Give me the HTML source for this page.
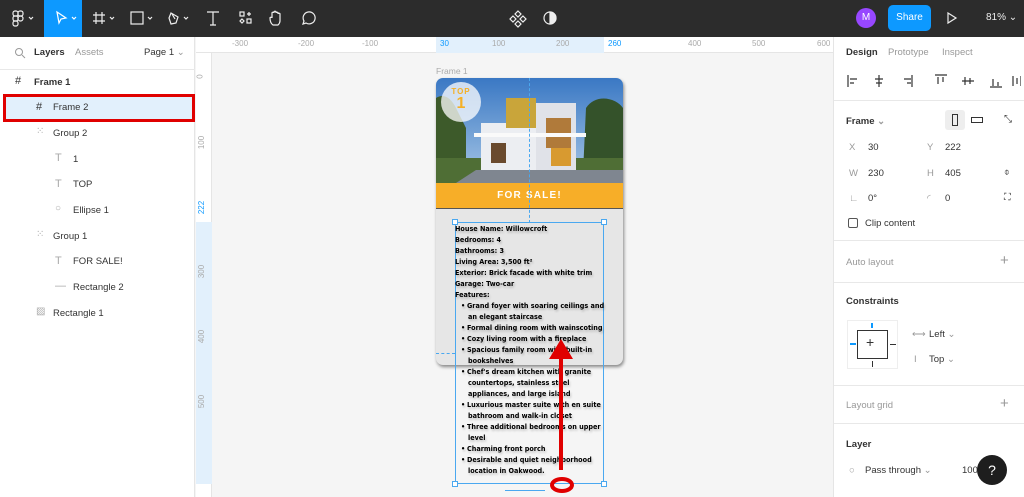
<!DOCTYPE html>
<html><head><meta charset="utf-8"><style>
*{box-sizing:border-box;margin:0;padding:0}
body{width:1024px;height:497px;overflow:hidden;font-family:"Liberation Sans",sans-serif;background:#f5f5f5;position:relative;font-size:10px;color:#333}
.abs{position:absolute}
.top{left:0;top:0;width:1024px;height:37px;background:#2c2c2c}
.left{left:0;top:37px;width:195px;height:460px;background:#fff;border-right:1px solid #e5e5e5}
.ly{position:absolute;font-size:9.5px;color:#333}
.gi{position:absolute;color:#aaa;font-size:11px}
.right{left:833px;top:37px;width:191px;height:460px;background:#fff;border-left:1px solid #e5e5e5}
.sep{position:absolute;left:0;width:191px;border-top:1px solid #e8e8e8}
.rt{position:absolute;font-size:9.5px;color:#333}
.g{color:#999}
.card{left:436px;top:78px;width:187px;height:287px;border-radius:7px;overflow:hidden;background:#e6e6e6;box-shadow:1px 2px 3px rgba(0,0,0,.45)}
.txt{left:455px;top:223px;font-family:"DejaVu Sans Condensed","Liberation Sans",sans-serif;font-weight:bold;font-size:7.2px;line-height:11px;color:#000;text-shadow:1px 2px 2px rgba(0,0,0,.2);width:170px;white-space:nowrap}
.txt .b{padding-left:6px;position:relative}
.txt .b:before{content:"•";position:absolute;left:0}
.txt .i{padding-left:13px}
</style></head><body>
<div class="abs top">
 <div class="abs" style="left:44px;top:0;width:38px;height:37px;background:#0d99ff"></div>
 <svg class="abs" style="left:0;top:0" width="330" height="37" fill="none" stroke="#eee" stroke-width="1.2">
  <rect x="13" y="11" width="5" height="5" rx="2"/><rect x="18" y="11" width="5" height="5" rx="2"/><rect x="13" y="16" width="5" height="5" rx="2"/><circle cx="20.5" cy="18.5" r="2.5"/><rect x="13" y="21" width="5" height="5" rx="2"/>
  <path d="M29 17l2 2 2-2"/>
  <path d="M57 12l9 6-5 1-2 4z" stroke="#fff"/><path d="M72 17l2 2 2-2" stroke="#fff"/>
  <path d="M96 12v12M102 12v12M93 15h12M93 21h12"/><path d="M110 17l2 2 2-2"/>
  <rect x="131" y="12" width="12" height="12"/><path d="M148 17l2 2 2-2"/>
  <path d="M171 13l7 4-2 6-5 1-2-6z M172 14l3 5"/><path d="M184 17l2 2 2-2"/>
  <path d="M207 12h12M213 12v13M210 25h6"/>
  <rect x="240" y="12" width="4" height="4"/><path d="M249 12v4M247 14h4"/><path d="M242 19l2 2-2 2-2-2z"/><rect x="247" y="19" width="4" height="4"/>
  <path d="M273 25c-3-2-3-5-3-7 0-1 2-1 2 0v-5c0-1 2-1 2 0v-1c0-1 2-1 2 0v1c0-1 2-1 2 0v1c0-1 2-1 2 0v7c0 2-1 3-2 4z"/>
  <path d="M303 24l1-3a6 6 0 1 1 2 2z"/>
 </svg>
 <svg class="abs" style="left:505px;top:9px" width="60" height="20" fill="none" stroke="#eee" stroke-width="1.2">
  <path d="M13 3l3 3-3 3-3-3zM8 8l3 3-3 3-3-3zM18 8l3 3-3 3-3-3zM13 13l3 3-3 3-3-3z" transform="translate(0,-1)"/>
  <circle cx="45" cy="9" r="6"/><path d="M45 3a6 6 0 0 1 0 12z" fill="#eee"/>
 </svg>
 <div class="abs" style="left:856px;top:8px;width:20px;height:20px;border-radius:50%;background:#9747ff;color:#fff;font-size:10px;text-align:center;line-height:20px">M</div>
 <div class="abs" style="left:888px;top:5px;width:43px;height:26px;border-radius:5px;background:#0d99ff;color:#fff;font-size:10px;text-align:center;line-height:26px">Share</div>
 <svg class="abs" style="left:945px;top:11px" width="14" height="14" fill="none" stroke="#eee" stroke-width="1.2"><path d="M3 2l8 5-8 5z"/></svg>
 <div class="abs" style="left:986px;top:12px;color:#eee;font-size:10px">81% ⌄</div>
</div>

<div class="abs left">
 <div class="abs" style="top:32px;left:0;width:195px;border-top:1px solid #e8e8e8"></div>
 <svg class="abs" style="left:14px;top:10px" width="12" height="12" fill="none" stroke="#999"><circle cx="5" cy="5" r="3.5"/><path d="M8 8l3 3"/></svg>
 <div class="ly" style="left:34px;top:10px;font-weight:bold;color:#333">Layers</div>
 <div class="ly" style="left:75px;top:10px;color:#999">Assets</div>
 <div class="ly" style="left:144px;top:10px">Page 1 <span class="g">⌄</span></div>
 <div class="gi" style="left:15px;top:38px;color:#333">#</div>
 <div class="ly" style="left:34px;top:40px;font-weight:bold">Frame 1</div>
 <div class="abs" style="left:3px;top:57px;width:192px;height:28px;background:#e2f0fc;border:3px solid #e00000"></div>
 <div class="gi" style="left:36px;top:64px;color:#333">#</div>
 <div class="ly" style="left:53px;top:65px">Frame 2</div>
 <div class="gi" style="left:36px;top:89px;font-size:10px">⁙</div><div class="ly" style="left:53px;top:91px">Group 2</div>
 <div class="gi" style="left:55px;top:115px">T</div><div class="ly" style="left:73px;top:117px">1</div>
 <div class="gi" style="left:55px;top:141px">T</div><div class="ly" style="left:73px;top:142px">TOP</div>
 <div class="gi" style="left:55px;top:166px;font-size:10px">○</div><div class="ly" style="left:73px;top:168px">Ellipse 1</div>
 <div class="gi" style="left:36px;top:192px;font-size:10px">⁙</div><div class="ly" style="left:53px;top:194px">Group 1</div>
 <div class="gi" style="left:55px;top:218px">T</div><div class="ly" style="left:73px;top:219px">FOR SALE!</div>
 <div class="gi" style="left:55px;top:243px">—</div><div class="ly" style="left:73px;top:245px">Rectangle 2</div>
 <div class="gi" style="left:36px;top:269px;font-size:10px">▨</div><div class="ly" style="left:53px;top:271px">Rectangle 1</div>
</div>

<div class="abs" style="left:196px;top:37px;width:637px;height:16px;background:#fff;border-bottom:1px solid #e5e5e5"></div>
<div class="abs" style="left:436px;top:37px;width:168px;height:16px;background:#e2f0fc"></div>
<div class="abs" style="left:196px;top:53px;width:16px;height:444px;background:#fff;border-right:1px solid #e5e5e5"></div>
<div class="abs" style="left:196px;top:222px;width:16px;height:262px;background:#e2f0fc"></div>
<div class="abs" style="top:39px;left:0;font-size:8px;color:#aaa;width:1024px">
 <span class="abs" style="left:232px">-300</span><span class="abs" style="left:298px">-200</span><span class="abs" style="left:362px">-100</span><span class="abs" style="left:440px;color:#0d99ff">30</span><span class="abs" style="left:492px">100</span><span class="abs" style="left:556px">200</span><span class="abs" style="left:608px;color:#0d99ff">260</span><span class="abs" style="left:688px">400</span><span class="abs" style="left:752px">500</span><span class="abs" style="left:817px">600</span>
</div>
<div class="abs" style="left:198px;top:72px;font-size:8px;color:#aaa;transform:rotate(-90deg)">0</div>
<div class="abs" style="left:195px;top:138px;font-size:8px;color:#aaa;transform:rotate(-90deg)">100</div>
<div class="abs" style="left:195px;top:203px;font-size:8px;color:#0d99ff;transform:rotate(-90deg)">222</div>
<div class="abs" style="left:195px;top:267px;font-size:8px;color:#aaa;transform:rotate(-90deg)">300</div>
<div class="abs" style="left:195px;top:332px;font-size:8px;color:#aaa;transform:rotate(-90deg)">400</div>
<div class="abs" style="left:195px;top:397px;font-size:8px;color:#aaa;transform:rotate(-90deg)">500</div>

<div class="abs" style="left:436px;top:66px;font-size:8.5px;color:#aaa">Frame 1</div>
<div class="abs card">
 <svg width="187" height="105" style="display:block">
  <defs><linearGradient id="sky" x1="0" y1="0" x2="0" y2="1"><stop offset="0" stop-color="#3a78c4"/><stop offset="1" stop-color="#a9c8e6"/></linearGradient></defs>
  <rect width="187" height="105" fill="url(#sky)"/>
  <path d="M0 20c8-5 15 0 20 10l10 20 0 40H0z" fill="#3d5a2a"/>
  <path d="M150 30c10-15 30-10 37 0v65h-40z" fill="#34522a"/>
  <rect x="0" y="80" width="187" height="25" fill="#4f6e35"/>
  <path d="M40 92h147v13H20z" fill="#7f8690"/>
  <rect x="45" y="45" width="55" height="47" fill="#eceef2"/>
  <rect x="70" y="20" width="30" height="30" fill="#c9a53a"/>
  <rect x="100" y="25" width="40" height="67" fill="#e0e2e8"/>
  <rect x="110" y="40" width="25" height="30" fill="#b07a3a"/>
  <rect x="38" y="55" width="112" height="4" fill="#fafafa"/>
  <rect x="55" y="65" width="15" height="20" fill="#6a4a2e"/>
  <rect x="115" y="70" width="20" height="18" fill="#d89a30"/>
 </svg>
 <div class="abs" style="left:5px;top:4px;width:40px;height:40px;border-radius:50%;background:rgba(255,255,255,.75);text-align:center;color:#f5b026;font-weight:bold">
  <div style="font-size:8px;margin-top:5px;letter-spacing:1px">TOP</div><div style="font-size:16px;line-height:15px">1</div></div>
 <div style="height:26px;background:#f7ae28;border-bottom:1px solid #555;color:#fff;font-weight:bold;font-size:10px;letter-spacing:1.2px;text-align:center;line-height:26px">FOR SALE!</div>
</div>
<div class="abs" style="left:529px;top:78px;height:145px;border-left:1px dashed #4aa8f0"></div>
<div class="abs" style="left:436px;top:353px;width:19px;border-top:1px dashed #4aa8f0"></div>
<div class="abs" style="left:455px;top:222px;width:149px;height:262px;border:1px solid #4aa8f0"></div>
<div class="abs" style="left:452px;top:219px;width:6px;height:6px;background:#fff;border:1px solid #4aa8f0"></div>
<div class="abs" style="left:601px;top:219px;width:6px;height:6px;background:#fff;border:1px solid #4aa8f0"></div>
<div class="abs" style="left:452px;top:481px;width:6px;height:6px;background:#fff;border:1px solid #4aa8f0"></div>
<div class="abs" style="left:601px;top:481px;width:6px;height:6px;background:#fff;border:1px solid #4aa8f0"></div>
<div class="abs" style="left:505px;top:490px;width:40px;border-top:1px solid #4aa8f0"></div>
<div class="abs txt">
<div>House Name: Willowcroft</div><div>Bedrooms: 4</div><div>Bathrooms: 3</div><div>Living Area: 3,500 ft²</div><div>Exterior: Brick facade with white trim</div><div>Garage: Two-car</div><div>Features:</div>
<div class="b" style="margin-left:6px">Grand foyer with soaring ceilings and</div><div class="i">an elegant staircase</div>
<div class="b" style="margin-left:6px">Formal dining room with wainscoting</div>
<div class="b" style="margin-left:6px">Cozy living room with a fireplace</div>
<div class="b" style="margin-left:6px">Spacious family room with built-in</div><div class="i">bookshelves</div>
<div class="b" style="margin-left:6px">Chef's dream kitchen with granite</div><div class="i">countertops, stainless steel</div><div class="i">appliances, and large island</div>
<div class="b" style="margin-left:6px">Luxurious master suite with en suite</div><div class="i">bathroom and walk-in closet</div>
<div class="b" style="margin-left:6px">Three additional bedrooms on upper</div><div class="i">level</div>
<div class="b" style="margin-left:6px">Charming front porch</div>
<div class="b" style="margin-left:6px">Desirable and quiet neighborhood</div><div class="i">location in Oakwood.</div>
</div>
<svg class="abs" style="left:540px;top:335px" width="50" height="162">
 <path d="M21 135V20" stroke="#e00000" stroke-width="4"/>
 <path d="M21 4L9 24h24z" fill="#e00000"/>
 <ellipse cx="22" cy="150" rx="10" ry="6" fill="none" stroke="#e00000" stroke-width="4"/>
</svg>

<div class="abs right">
 <div class="rt" style="left:12px;top:10px;font-weight:bold">Design</div>
 <div class="rt g" style="left:54px;top:10px">Prototype</div>
 <div class="rt g" style="left:108px;top:10px">Inspect</div>
 <svg class="abs" style="left:12px;top:37px" width="175" height="14" fill="none" stroke="#333" stroke-width="1.2">
  <path d="M2 1v12M4 5h7M4 9h4"/><path d="M33 1v12M29 5h8M30 9h6"/><path d="M66 1v12M58 5h7M61 9h4"/><path d="M89 1h12M92 3v7M97 3v5"/><path d="M116 7h12M119 3v8M124 4v6"/><path d="M144 13h12M147 5v7M152 8v4"/><path d="M167 2v10M175 2v10M171 4v6"/>
 </svg>
 <div class="sep" style="top:63px"></div>
 <div class="rt" style="left:12px;top:79px;font-weight:bold">Frame <span class="g">⌄</span></div>
 <div class="abs" style="left:111px;top:73px;width:20px;height:20px;background:#eee;border-radius:3px"></div>
 <div class="abs" style="left:118px;top:77px;width:6px;height:12px;border:1px solid #333"></div>
 <div class="abs" style="left:137px;top:80px;width:12px;height:6px;border:1px solid #333"></div>
 <div class="rt" style="left:170px;top:77px;font-size:10px">⤡</div>
 <div class="rt g" style="left:15px;top:105px">X</div><div class="rt" style="left:34px;top:105px">30</div>
 <div class="rt g" style="left:93px;top:105px">Y</div><div class="rt" style="left:111px;top:105px">222</div>
 <div class="rt g" style="left:15px;top:131px">W</div><div class="rt" style="left:34px;top:131px">230</div>
 <div class="rt g" style="left:93px;top:131px">H</div><div class="rt" style="left:111px;top:131px">405</div>
 <div class="rt" style="left:170px;top:130px">⌽</div>
 <div class="rt g" style="left:15px;top:156px">∟</div><div class="rt" style="left:34px;top:156px">0°</div>
 <div class="rt g" style="left:93px;top:156px">◜</div><div class="rt" style="left:111px;top:156px">0</div>
 <div class="rt" style="left:170px;top:155px">⛶</div>
 <div class="abs" style="left:14px;top:181px;width:10px;height:10px;border:1px solid #555;border-radius:2px"></div>
 <div class="rt" style="left:31px;top:181px">Clip content</div>
 <div class="sep" style="top:203px"></div>
 <div class="rt g" style="left:12px;top:220px">Auto layout</div><div class="rt g" style="left:166px;top:215px;font-size:15px">+</div>
 <div class="sep" style="top:245px"></div>
 <div class="rt" style="left:12px;top:259px;font-weight:bold">Constraints</div>
 <div class="abs" style="left:13px;top:283px;width:51px;height:49px;border:1px solid #eee"></div>
 <div class="abs" style="left:23px;top:293px;width:31px;height:29px;border:1px solid #333"></div>
 <div class="rt" style="left:32px;top:297px;font-size:14px">+</div>
 <div class="abs" style="left:37px;top:286px;width:2px;height:5px;background:#0d99ff"></div>
 <div class="abs" style="left:16px;top:306px;width:6px;height:2px;background:#0d99ff"></div>
 <div class="abs" style="left:56px;top:307px;width:6px;height:1px;background:#333"></div>
 <div class="abs" style="left:38px;top:324px;width:1px;height:6px;background:#333"></div>
 <div class="rt g" style="left:78px;top:292px">⟷</div><div class="rt" style="left:95px;top:292px">Left <span class="g">⌄</span></div>
 <div class="rt g" style="left:80px;top:317px">I</div><div class="rt" style="left:95px;top:317px">Top <span class="g">⌄</span></div>
 <div class="sep" style="top:348px"></div>
 <div class="rt g" style="left:12px;top:363px">Layout grid</div><div class="rt g" style="left:166px;top:358px;font-size:15px">+</div>
 <div class="sep" style="top:386px"></div>
 <div class="rt" style="left:12px;top:402px;font-weight:bold">Layer</div>
 <div class="rt g" style="left:15px;top:428px">○</div><div class="rt" style="left:31px;top:428px">Pass through <span class="g">⌄</span></div>
 <div class="rt" style="left:128px;top:428px">100</div>
 <div class="abs" style="left:143px;top:418px;width:30px;height:30px;border-radius:50%;background:#1e1e1e;color:#fff;text-align:center;line-height:30px;font-size:14px">?</div>
</div>
</body></html>
